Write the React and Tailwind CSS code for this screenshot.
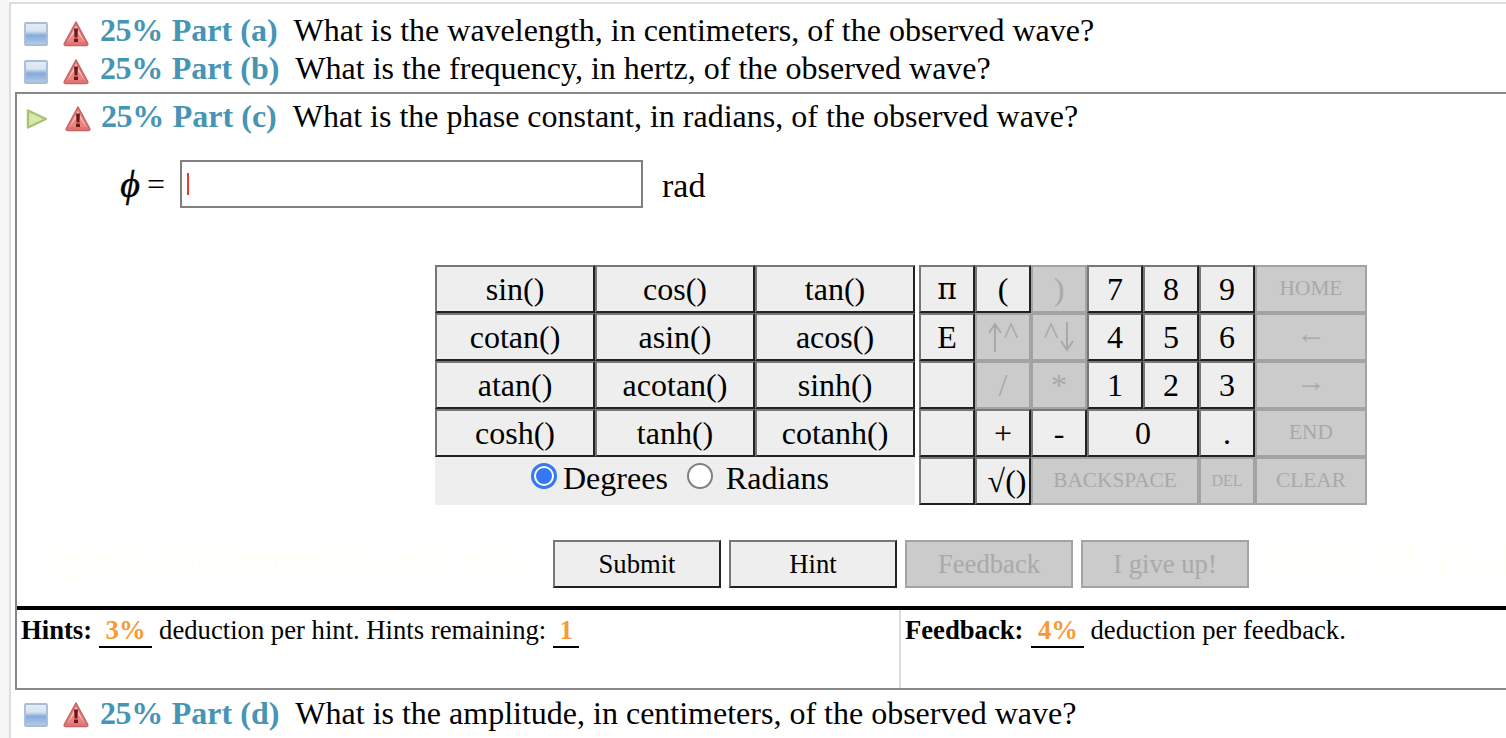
const serif = "font-['Liberation_Serif','Times_New_Roman',serif]";

function Square({ id }) {
  return (
    <svg width="24" height="24" viewBox="0 0 24 24" className="shrink-0 blur-[0.6px]">
      <defs>
        <linearGradient id={id} x1="0" y1="0" x2="0" y2="1">
          <stop offset="0" stopColor="#e4ecf6" />
          <stop offset="0.36" stopColor="#d9e4f2" />
          <stop offset="0.56" stopColor="#86acdb" />
          <stop offset="0.8" stopColor="#9dbce2" />
          <stop offset="1" stopColor="#bcd0e8" />
        </linearGradient>
      </defs>
      <rect x="1" y="1" width="22" height="22" rx="1" fill={`url(#${id})`} stroke="#a9bcd4" strokeWidth="1.8" />
    </svg>
  );
}

function Warn() {
  return (
    <svg width="26" height="26" viewBox="0 0 26 26" className="shrink-0 blur-[0.4px]">
      <path d="M13 0.8 L24.8 22.6 Q25.6 24.6 23 24.6 L3 24.6 Q0.4 24.6 1.2 22.6 Z" fill="#e07474" stroke="#c66262" strokeWidth="1.2" strokeLinejoin="round" />
      <path d="M13 4.4 L21.8 21 L4.2 21 Z" fill="#f4bcbc" />
      <path d="M13 10 L21.8 21 L4.2 21 Z" fill="#e98484" />
      <path d="M11 7.5 H15 L14.4 16.5 H11.6 Z" fill="#701818" />
      <rect x="11" y="17.6" width="4" height="3.4" fill="#701818" />
    </svg>
  );
}

function Play() {
  return (
    <svg width="22" height="22" viewBox="0 0 22 22" className="shrink-0 blur-[0.4px]">
      <path d="M2 2.5 L20 11 L2 19.5 Z" fill="#d9e8ad" stroke="#a9c274" strokeWidth="2.4" strokeLinejoin="round" />
    </svg>
  );
}

function PartRow({ icon, label, q, warnCls = "ml-[15px] mr-[11px]", iconCls = "mt-[6px]" }) {
  return (
    <div className="flex items-center text-[32px] leading-[38px] h-[38px] whitespace-nowrap">
      <span className={`flex items-center ${iconCls}`}>
        {icon}
        <span className={warnCls}><Warn /></span>
      </span>
      <span className="font-bold text-[#4695b5] mb-[2px] tracking-[-0.4px]">25%</span>
      <span className="font-bold text-[#4695b5] ml-[9px] mb-[2px]">{label}</span>
      <span className="ml-[16px] text-black mb-[2px]">{q}</span>
    </div>
  );
}

function Key({ children, off, className = "" }) {
  const on = "bg-[#eeeeee] border-t-[#777777] border-l-[#777777] border-b-[#222222] border-r-[#222222] text-black";
  const dis = "bg-[#cbcbcb] border-[#a3a3a3] text-[#a9a9a9]";
  return (
    <div className={`border-2 flex items-center justify-center whitespace-nowrap overflow-hidden leading-none ${off ? dis : on} ${className}`}>
      {children}
    </div>
  );
}

function Arrow({ up }) {
  return (
    <svg width="16" height="30" viewBox="0 0 16 30" className="shrink-0" aria-label={up ? "up arrow" : "down arrow"}>
      {up ? (
        <path d="M8 30 V2 M2 11 L8 2 L14 11" fill="none" stroke="#a9a9a9" strokeWidth="2" />
      ) : (
        <path d="M8 0 V28 M2 19 L8 28 L14 19" fill="none" stroke="#a9a9a9" strokeWidth="2" />
      )}
    </svg>
  );
}

const fns = ["sin()", "cos()", "tan()", "cotan()", "asin()", "acos()", "atan()", "acotan()", "sinh()", "cosh()", "tanh()", "cotanh()"];

export default function App() {
  return (
    <div className={`w-[1506px] h-[738px] overflow-hidden bg-white flex ${serif}`}>
      <div className="w-[9px] bg-[#f6f6f6] shrink-0" />
      <div className="w-[2px] bg-[#dddddd] shrink-0" />
      <div className="flex-1 min-w-0">
        <div className="h-[4px] -ml-[2px] border-t-[2px] border-t-white bg-[#dddddd]" />
        <div className="pt-[8px] pl-[13px]">
          <PartRow icon={<Square id="sa" />} label="Part (a)" q="What is the wavelength, in centimeters, of the observed wave?" />
          <PartRow icon={<Square id="sb" />} label="Part (b)" q="What is the frequency, in hertz, of the observed wave?" />
        </div>

        <div className="mt-[4px] ml-[4px] border-2 border-r-0 border-[#888888]">
          <div className="pt-[4px] pl-[9px]">
            <PartRow icon={<Play />} label="Part (c)" q="What is the phase constant, in radians, of the observed wave?" warnCls="ml-[17px] mr-[10px]" iconCls="mt-[4px]" />
          </div>

          <div className="mt-[24px] flex items-center h-[48px] text-[32px]">
            <div className="w-[163px] flex justify-end items-center pr-[15px] leading-none whitespace-nowrap">
              <span className="italic text-[38px] mr-[7px] [-webkit-text-stroke:0.5px_black]">ϕ</span>
              <span>=</span>
            </div>
            <div className="w-[463px] h-[48px] border-2 border-[#808080] flex items-center pl-[5px]">
              <div className="w-[2px] h-[22px] bg-[#f03a2e]" />
            </div>
            <div className="ml-[19px] mt-[3px] leading-none text-[34px]">rad</div>
          </div>

          <div className="mt-[57px] ml-[418px] flex text-[32px]">
            <div className="w-[480px]">
              <div className="grid grid-cols-3 auto-rows-[48px]">
                {fns.map((f) => (
                  <Key key={f}>{f}</Key>
                ))}
              </div>
              <div className="h-[48px] bg-[#eeeeee] flex items-center pl-[96px] whitespace-nowrap">
                <span className="w-[26px] h-[26px] mb-[10px] rounded-full border-[3px] border-[#3478f6] bg-white flex items-center justify-center">
                  <span className="w-[16px] h-[16px] rounded-full bg-[#3478f6]" />
                </span>
                <span className="ml-[6px] mb-[6px]">Degrees</span>
                <span className="ml-[19px] mb-[10px] w-[26px] h-[26px] rounded-full border-2 border-[#808080] bg-white" />
                <span className="ml-[13px] mb-[6px]">Radians</span>
              </div>
            </div>
            <div className="ml-[4px] grid grid-cols-[56px_56px_56px_56px_56px_56px_112px] auto-rows-[48px]">
              <Key className="font-['DejaVu_Serif',serif] text-[30px]">π</Key>
              <Key>(</Key>
              <Key off>)</Key>
              <Key>7</Key>
              <Key>8</Key>
              <Key>9</Key>
              <Key off className="text-[21.33px]">HOME</Key>

              <Key>E</Key>
              <Key off><Arrow up /><span className="mb-[8px]">^</span></Key>
              <Key off><span className="mb-[8px]">^</span><Arrow /></Key>
              <Key>4</Key>
              <Key>5</Key>
              <Key>6</Key>
              <Key off className="text-[30px] pb-[8px]">←</Key>

              <Key />
              <Key off>/</Key>
              <Key off>*</Key>
              <Key>1</Key>
              <Key>2</Key>
              <Key>3</Key>
              <Key off className="text-[30px] pb-[8px]">→</Key>

              <Key />
              <Key>+</Key>
              <Key>-</Key>
              <Key className="col-span-2">0</Key>
              <Key>.</Key>
              <Key off className="text-[21.33px]">END</Key>

              <Key />
              <Key className="pl-[8px]">√()</Key>
              <Key off className="col-span-3 text-[21.33px]">BACKSPACE</Key>
              <Key off className="text-[16px]">DEL</Key>
              <Key off className="text-[21.33px]">CLEAR</Key>
            </div>
          </div>

          <div className="mt-[35px] flex items-center h-[48px] text-[26.67px]">
            <div className="w-[536px] shrink-0 pl-[37px] mb-[8px] text-[38.4px] leading-none text-[#fffff8] whitespace-nowrap font-['Liberation_Sans',sans-serif]">lgarcia9@terpmail.umd.edu</div>
            <div className="flex gap-[8px] shrink-0">
              <Key className="w-[168px] h-[48px]">Submit</Key>
              <Key className="w-[168px] h-[48px]">Hint</Key>
              <Key off className="w-[168px] h-[48px]">Feedback</Key>
              <Key off className="w-[168px] h-[48px]">I give up!</Key>
            </div>
            <div className="ml-[15px] mb-[8px] text-[38.4px] leading-none text-[#fffff8] whitespace-nowrap font-['Liberation_Sans',sans-serif]">2M68-0B-7B-4</div>
          </div>

          <div className="mt-[18px] border-t-[4px] border-black h-[82px] flex text-[26.67px] leading-[30px]">
            <div className="w-[884px] pl-[4px] pt-[5px] whitespace-nowrap border-r-2 border-[#dddddd] flex items-start">
              <b>Hints:</b>
              <span className="ml-[7px] w-[53px] h-[33px] border-b-2 border-black text-center font-bold text-[#f59b35]">3%</span>
              <span className="ml-[7px]">deduction per hint. Hints remaining:</span>
              <span className="ml-[7px] w-[26px] h-[33px] border-b-2 border-black text-center font-bold text-[#f59b35]">1</span>
            </div>
            <div className="pl-[4px] pt-[5px] whitespace-nowrap flex items-start">
              <b>Feedback:</b>
              <span className="ml-[8px] w-[53px] h-[33px] border-b-2 border-black text-center font-bold text-[#f59b35]">4%</span>
              <span className="ml-[6px]">deduction per feedback.</span>
            </div>
          </div>
        </div>

        <div className="pt-[5px] pl-[13px]">
          <PartRow icon={<Square id="sd" />} label="Part (d)" q="What is the amplitude, in centimeters, of the observed wave?" iconCls="mt-[2px]" />
        </div>
      </div>
    </div>
  );
}
